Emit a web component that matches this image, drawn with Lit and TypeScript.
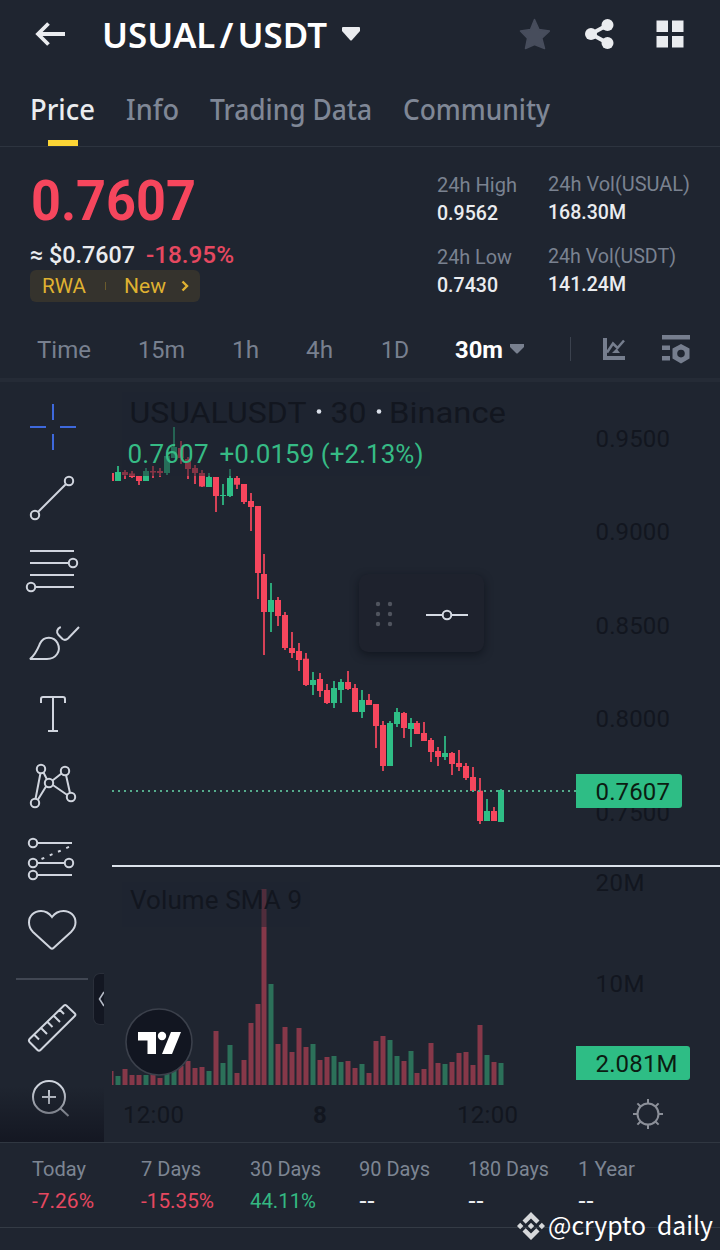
import { LitElement, html, svg, css } from "lit";
import { customElement, property } from "lit/decorators.js";

/** Single-line label with a fixed advance width, centred on its cap height. */
@customElement("fit-label")
export class FitLabel extends LitElement {
  @property({ attribute: false }) text: unknown = "";
  @property({ type: Number }) w = 10;
  @property({ type: Number }) size = 20;
  static styles = css`
    :host { display: block; line-height: 0; flex: none; }
    svg { display: block; overflow: visible; }
    text { fill: currentColor; white-space: pre; }
  `;
  render() {
    return html`<svg width=${this.w} height=${this.size}>
      <text x="0" y=${this.size * 0.857} font-size=${this.size} textLength=${this.w} lengthAdjust="spacingAndGlyphs">${this.text}</text>
    </svg>`;
  }
}

// x centre, high, low, body top, body bottom, rising, volume top
type Bar = [number, number, number, number, number, number, number];
const BARS: Bar[] = [
  [110, 473, 481, 473, 481, 0, 1071],
  [118, 466, 481, 472, 481, 1, 1076],
  [125, 470, 479, 472, 475, 0, 1069],
  [132, 471, 478, 473.5, 477, 0, 1075],
  [139, 476, 485, 476, 481, 0, 1075],
  [146, 468, 481, 471, 481, 1, 1075],
  [153, 466, 478, 471, 472.5, 0, 1073],
  [160, 468, 477, 471, 473, 0, 1078],
  [167, 452, 475, 456, 473, 1, 1071],
  [174, 427, 458, 447, 458, 1, 1069],
  [181, 441, 464, 448, 458, 0, 1066],
  [188, 457, 479, 459, 469, 0, 1061],
  [195, 465, 484, 468, 473, 0, 1068],
  [202, 470, 487, 473, 486.5, 0, 1067],
  [209, 473, 487, 477, 487, 1, 1071],
  [216, 477, 512, 477, 496, 0, 1031],
  [223, 484, 505, 495, 496, 1, 1063],
  [230, 469, 497, 478, 496, 1, 1045],
  [237, 476, 489, 478, 484.7, 0, 1073],
  [244, 484, 504, 484, 502, 0, 1060],
  [251, 493, 531, 501, 507, 0, 1023],
  [258, 506, 599, 506, 573, 0, 1004],
  [264, 554, 655, 574, 612, 0, 889],
  [271, 583, 632, 600, 612, 1, 984],
  [278, 597, 626, 600, 616, 0, 1044],
  [285, 612, 650, 615, 648, 0, 1027],
  [292, 632, 658, 648, 653, 0, 1052],
  [299, 643, 671, 651, 660, 0, 1028],
  [306, 653, 686, 658.7, 685, 0, 1047],
  [313, 672, 695, 680, 685, 1, 1044],
  [320, 673, 697, 679, 691, 0, 1060],
  [327, 684, 704, 690, 703, 0, 1057],
  [334, 681, 708, 688, 703, 1, 1056],
  [341, 679, 703, 682, 690, 1, 1062],
  [348, 671, 690, 682, 689, 0, 1061],
  [355, 684, 712, 688, 712, 0, 1068],
  [362, 690, 718, 700, 712, 1, 1064],
  [369, 694, 705, 700, 705, 0, 1073],
  [376, 704, 748, 704, 726, 0, 1041],
  [383, 721, 771, 725, 766, 0, 1036],
  [390, 721, 766, 723, 766, 1, 1040],
  [397, 708, 727, 712, 724, 1, 1056],
  [404, 712, 738, 713, 728, 0, 1061],
  [411, 718, 747, 723, 729, 1, 1051],
  [417, 721, 734, 723, 734, 0, 1073],
  [424, 722, 741, 733, 741, 0, 1069],
  [431, 738, 762, 740, 752, 0, 1043],
  [438, 747, 766, 751, 757, 0, 1063],
  [445, 736, 760, 753, 757, 1, 1064],
  [452, 752, 775, 753, 764, 0, 1062],
  [459, 750, 771, 763, 767, 0, 1053],
  [466, 763, 780, 766, 778, 0, 1052],
  [473, 767, 791, 777, 791, 0, 1065],
  [480, 778, 824, 790.7, 821, 0, 1025],
  [487, 799, 821, 811, 821, 1, 1055],
  [494, 807, 821, 811, 821, 0, 1062],
  [501, 789, 822, 790, 822, 1, 1063],
];

// Drawing tools share one coordinate space; each cell is a 72px slice of it.
const TOOLS = [
  { y: 391, cls: "active", art: svg`<path d="M53 404V420M53 434V450M30 427H46M60 427H76"/>` },
  { y: 463, cls: "", art: svg`<path d="M38 512L66 484"/><circle cx="69" cy="481" r="4.2"/><circle cx="35" cy="515" r="4.2"/>` },
  { y: 535, cls: "", art: svg`<path d="M30 551H74M30 563H69M30 575H74M36 587H74"/><circle cx="73" cy="563" r="4.2"/><circle cx="31" cy="587" r="4.2"/>` },
  { y: 607, cls: "", art: svg`<path d="M30 659C36 654 38 648 40 643.500C44 635.500 54 636.500 57.500 643C61.500 651 56 659 47 659Z" stroke-linejoin="bevel"/><path d="M60.800 627C56.800 628.500 56 632.500 58.500 635L62.500 639Q65.200 641 68 638.500L79 627"/>` },
  { y: 679, cls: "", art: svg`<path d="M41 703V699Q41 697 43 697H63Q65 697 65 699V703M53 697V731M48 731H58"/>` },
  { y: 751, cls: "", art: svg`<path d="M40.500 773L35.500 799M43.500 772.500L47 779.500M52.500 780.500L61.500 773.500M66 775L70 793M52.800 785L67.300 795M46.300 786L37.700 800"/><circle cx="41" cy="769" r="4.200"/><circle cx="65" cy="771" r="4.200"/><circle cx="49" cy="783" r="4.200"/><circle cx="71" cy="797" r="4.200"/><circle cx="35" cy="803" r="4.200"/>` },
  { y: 823, cls: "", art: svg`<path d="M37 843H72M37 863H65M37 875H72"/><path d="M41.500 859L70 846.500" stroke-dasharray="3 6"/><circle cx="33" cy="843" r="4.200"/><circle cx="69" cy="863" r="4.200"/><circle cx="33" cy="863" r="4.200"/><circle cx="33" cy="875" r="4.200"/>` },
  { y: 895, cls: "", art: svg`<path d="M52 917C49 913 45 911 41 911C34 911 29 916 29 922.500C29 926.500 30.500 929.500 33 932L50.500 948Q52 949.500 53.500 948L71 932C73.500 929.500 75.500 926.500 75.500 922.500C75.500 916 70.500 911 63.500 911C59 911 55 913 52 917Z"/>` },
];
const TOOLS_LOW = [
  { y: 992, art: svg`<path d="M64 1005.500Q65.200 1004.500 66.400 1005.500L74.800 1013.500Q76 1014.800 74.800 1016L40.500 1050Q39 1051.500 37.500 1050L29.500 1042Q28.300 1040.500 29.500 1039ZM34 1034.500L39 1039.500M41 1028L47 1034M47.500 1022L52.500 1027M54 1016L60 1022M60 1010L64 1014"/>` },
  { y: 1064, art: svg`<circle cx="49" cy="1097" r="16"/><path d="M49 1090V1104M42 1097H56M60.500 1108.500L68.500 1116"/>` },
];

const PRICE_TICKS = [
  { t: "0.9500", y: 447 }, { t: "0.9000", y: 540 }, { t: "0.8500", y: 634 },
  { t: "0.8000", y: 727 }, { t: "0.7500", y: 820.5 },
];

@customElement("price-chart")
export class PriceChart extends LitElement {
  static styles = css`
    :host { display: block; position: relative; }
    svg { display: block; }
    text { font-family: Roboto, sans-serif; }
    .up { fill: #2fbe86; } .down { fill: #f6465d; }
    .vup { fill: #2c7059; } .vdown { fill: #863849; }
    .wick { opacity: 0.85; }
    .veil { fill: #1f2530; opacity: 0.52; }
    .ink { fill: #12161f; }
    .green { fill: #36bb85; }
    .tag { fill: #2ebd85; }
    .tagink { fill: #0b1c12; }
    .dot { fill: #d9dfe8; }
    .dots { stroke: #55ac8c; stroke-width: 2; stroke-dasharray: 2 4; }
    .split { fill: #dbe2ea; }
    .badge { fill: #121621; stroke: #3b404b; stroke-width: 1.6; }
    .white { fill: #fff; }
    .sun { fill: none; stroke: #8b8f98; stroke-width: 2; }
    .floating {
      position: absolute; left: 255px; top: 192px; width: 125px; height: 78px;
      background: #1e222d; border-radius: 9px; box-shadow: 0 3px 8px rgba(8, 11, 18, 0.55);
    }
    .grip { fill: #50545e; }
    .handle { fill: none; stroke: #d5dae3; stroke-width: 2; }
  `;
  render() {
    return html`
      <svg width="616" height="760" viewBox="104 382 616 760">
        <defs><clipPath id="plot"><rect x="112" y="382" width="608" height="760"/></clipPath></defs>
        <g clip-path="url(#plot)">
          ${BARS.map(([x, , , , , up, v]) => svg`<rect class=${up ? "vup" : "vdown"} x=${x - 2.5} y=${v} width=${x === 110 ? 6 : 5} height=${1085 - v}/>`)}
          ${BARS.map(([x, h, l, t, b, up]) => svg`
            <rect class="wick ${up ? "up" : "down"}" x=${x - 1} y=${h} width="2" height=${l - h}/>
            <rect class=${up ? "up" : "down"} x=${x - 3} y=${t} width=${x === 110 ? 7 : 6} height=${b - t}/>`)}
        </g>
        <rect class="veil" x="122" y="392" width="308" height="84"/>
        <rect class="veil" x="122" y="882" width="188" height="45"/>
        <path class="dots" d="M112 791H576"/>

        <text class="ink" x="129.500" y="422.500" font-size="30" textLength="177" lengthAdjust="spacingAndGlyphs">USUALUSDT</text>
        <text class="ink" x="330.500" y="422.500" font-size="30" textLength="36" lengthAdjust="spacingAndGlyphs">30</text>
        <text class="ink" x="389" y="422.500" font-size="30" textLength="117" lengthAdjust="spacingAndGlyphs">Binance</text>
        <circle class="dot" cx="319" cy="411.500" r="2.300"/>
        <circle class="dot" cx="379" cy="411.500" r="2.300"/>
        <text class="green" x="127.500" y="463" font-size="26" textLength="81">0.7607</text>
        <text class="green" x="219.500" y="463" font-size="26" textLength="204">+0.0159 (+2.13%)</text>

        ${PRICE_TICKS.map((p) => svg`<text class="ink" x="595.500" y=${p.y} font-size="24" textLength="74.500">${p.t}</text>`)}
        <rect class="tag" x="576" y="774" width="106" height="34" rx="3"/>
        <rect class="tag" x="576" y="774" width="8" height="34"/>
        <text class="tagink" x="595.500" y="800" font-size="24" textLength="74.500">0.7607</text>

        <rect class="split" x="112" y="865" width="608" height="2"/>
        <text class="ink" x="130" y="909" font-size="26" textLength="172">Volume SMA 9</text>
        <text class="ink" x="595.500" y="891" font-size="24" textLength="49">20M</text>
        <text class="ink" x="595.500" y="992" font-size="24" textLength="49">10M</text>
        <rect class="tag" x="576" y="1046" width="114" height="34" rx="3"/>
        <rect class="tag" x="576" y="1046" width="8" height="34"/>
        <text class="tagink" x="595.500" y="1072" font-size="24" textLength="82">2.081M</text>

        <text class="ink" x="123" y="1123" font-size="24" textLength="61">12:00</text>
        <text class="ink" x="313" y="1123" font-size="24" font-weight="700">8</text>
        <text class="ink" x="457" y="1123" font-size="24" textLength="61">12:00</text>

        <circle class="badge" cx="159" cy="1042" r="33"/>
        <path class="white" d="M138 1032H156V1054H147.500V1040.500H138Z"/>
        <circle class="white" cx="162" cy="1036" r="4.200"/>
        <path class="white" d="M171 1032H181L172 1054H162Z"/>

        <g class="sun">
          <circle cx="648" cy="1114" r="10.500"/>
          ${[0, 45, 90, 135, 180, 225, 270, 315].map((a) => svg`<path d="M648 1103.500V1099" transform="rotate(${a} 648 1114)"/>`)}
        </g>
      </svg>
      <svg class="floating" viewBox="359 574 125 78">
        ${[604, 614, 624].map((y) => svg`<circle class="grip" cx="378" cy=${y} r="2.200"/><circle class="grip" cx="390" cy=${y} r="2.200"/>`)}
        <path class="handle" d="M426 615H442.500M451.500 615H468"/>
        <circle class="handle" cx="447" cy="615" r="4.300"/>
      </svg>`;
  }
}

@customElement("app-root")
export class AppRoot extends LitElement {
  static styles = css`
    :host { display: block; }
    .screen {
      position: relative; width: 720px; height: 1250px; overflow: hidden; box-sizing: border-box;
      background: #1f2530; font-family: Roboto, sans-serif; color: #eaecef;
      display: flex; flex-direction: column;
    }
    svg { display: block; flex: none; }
    .plex { font-family: "Noto Sans", sans-serif; }
    .header { height: 70px; flex: none; box-sizing: border-box; display: flex; align-items: center; padding: 0 35px 2px 34px; }
    .title { font-weight: 600; color: #fff; margin: 3px 0 0 36px; }
    .header .caret { margin-left: 15px; }
    .actions { margin-left: auto; display: flex; align-items: center; gap: 34px; }
    .star { margin-right: 1px; }
    .tabs {
      height: 77px; flex: none; box-sizing: border-box; display: flex; gap: 31px;
      padding: 26px 0 0 30px; border-bottom: 1px solid #2d343f; color: #7f8796; font-weight: 500;
    }
    .tab { display: flex; flex-direction: column; align-items: center; justify-content: space-between; }
    .tab.on { color: #eaecef; }
    .tab.on::after { content: ""; width: 30px; height: 6px; background: #fcd535; }
    .ticker { height: 171px; flex: none; display: flex; }
    .left { padding: 25px 0 0 30px; width: 437px; flex: none; box-sizing: border-box; }
    .price { color: #f6465d; font-weight: 700; margin-left: 1px; }
    .approx { display: flex; gap: 11px; margin: 14px 0 4px; font-weight: 500; }
    .neg { color: #e64860; } .pos { color: #34b882; }
    .badge {
      width: 170px; height: 32px; box-sizing: border-box; border-radius: 6px; background: #35332d; color: #dfb131;
      display: flex; align-items: center; padding-left: 12px;
    }
    .badge i { width: 1px; height: 8px; background: #6b5b2c; margin: 0 18px 0 19px; }
    .badge svg { margin-left: 15px; }
    .stat { display: flex; flex-direction: column; gap: 8px; width: 111px; flex: none; padding-top: 28px; color: #7a8290; }
    .stat.alt { padding-top: 27px; }
    .stat .v { color: #eaecef; font-weight: 500; }
    .stat .v + .k { margin-top: 16px; }
    .frames {
      height: 64px; flex: none; box-sizing: border-box; display: flex; align-items: center; color: #78808f;
      padding: 2px 29px 0 37px; border-bottom: 4px solid #252b36;
    }
    .frames .cur { color: #fff; font-weight: 700; margin-left: 46px; margin-right: 7px; }
    .g1 { margin-left: 47px; } .g2 { margin-left: 47px; } .g3 { margin-left: 47px; } .g4 { margin-left: 48px; }
    .rule { width: 1px; height: 24px; background: #3b424e; margin: 0 31px 0 46px; }
    .frames .gear { margin-left: auto; }
    .main { height: 760px; flex: none; display: flex; border-bottom: 1px solid #303741; }
    .side { width: 104px; position: relative; display: flex; flex-direction: column; padding-top: 9px; box-sizing: border-box; }
    .tool { fill: none; stroke: #d0d5de; stroke-width: 2; }
    .tool.active { stroke: #3e69dc; }
    .sep { height: 2px; margin: 11px 16px 12px; background: #414753; flex: none; }
    .fade { position: absolute; left: 0; bottom: 0; width: 104px; height: 56px; background: linear-gradient(rgba(19, 22, 33, 0), rgba(19, 22, 33, 0.92)); }
    .collapse {
      position: absolute; right: 0; top: 591px; width: 11px; height: 52px; box-sizing: border-box;
      background: #131722; border: 1px solid #2a2f3a; border-right: 0; border-radius: 7px 0 0 7px;
    }
    .collapse path { fill: none; stroke: #b4bac5; stroke-width: 1.600; }
    .perf {
      height: 85px; flex: none; box-sizing: border-box; display: grid; grid-template-columns: repeat(4, 109px) 110px 109px;
      padding: 16px 0 0 32px; border-bottom: 1px solid #343b45; color: #7d8593;
    }
    .perf .col { display: flex; flex-direction: column; gap: 12px; }
    .perf .none { color: #eaecef; font-weight: 500; }
    .mark {
      position: absolute; left: 517px; top: 1211px; display: flex; align-items: center; gap: 3px; color: #fff;
      font-family: "Noto Sans CJK SC", sans-serif;
    }
    .mark path { fill: #d6d8da; }
  `;

  render() {
    const stat = (k: string, kw: number, v: string, vw: number) => html`
      <fit-label class="k" .text=${k} .w=${kw} .size=${20}></fit-label>
      <fit-label class="v" .text=${v} .w=${vw} .size=${20}></fit-label>`;
    const tab = (t: string, w: number, on = false) => html`
      <div class="tab ${on ? "on" : ""}"><fit-label class="plex" .text=${t} .w=${w} .size=${28}></fit-label></div>`;
    const frame = (t: string, w: number, cls: string) => html`<fit-label class=${cls} .text=${t} .w=${w} .size=${24}></fit-label>`;
    const perf = (t: string, w: number, v: string, vw: number, cls: string) => html`
      <div class="col">
        <fit-label .text=${t} .w=${w} .size=${20}></fit-label>
        <fit-label class=${cls} .text=${v} .w=${vw} .size=${20}></fit-label>
      </div>`;
    const pair = svg`USUAL<tspan dx="4">/</tspan><tspan dx="4">USDT</tspan>`;
    return html`
      <div class="screen">
        <div class="header">
          <svg width="32" height="26" viewBox="34 21 32 26"><path d="M65 34H38M48.500 23.500L38 34L48.500 44.500" fill="none" stroke="#eaecef" stroke-width="3.800"/></svg>
          <fit-label class="title plex" .text=${pair} .w=${225} .size=${34.5}></fit-label>
          <svg class="caret" width="18" height="14" viewBox="0 0 18 14"><path d="M1 0H17Q18 0 18 1V4L10 13Q9 14 8 13L0 4V1Q0 0 1 0Z" fill="#eaecef"/></svg>
          <div class="actions">
            <svg class="star" width="31" height="32" viewBox="519 18 31 32"><path d="M534.500 19.500L539 29.500L549.500 31L541.800 38.300L544.500 48.500L534.500 44.500L525.500 48.500L527.500 38.300L520.500 31L530.500 29.500Z" fill="#474d5c" stroke="#474d5c" stroke-width="1.500" stroke-linejoin="round"/></svg>
            <svg width="30" height="32" viewBox="585 18 30 32"><g fill="#eaecef"><circle cx="607.500" cy="25" r="6"/><circle cx="591" cy="34" r="6"/><circle cx="607.500" cy="43" r="6"/></g><path d="M607.500 25L591 34L607.500 43" fill="none" stroke="#eaecef" stroke-width="4"/></svg>
            <svg class="grid" width="36" height="28" viewBox="649 20 36 28"><path d="M656.500 20.500H668V32H656.500ZM672 20.500H683.500V32H672ZM656.500 36H668V47.500H656.500ZM672 36H683.500V47.500H672Z" fill="#eaecef"/></svg>
          </div>
        </div>

        <div class="tabs">
          ${tab("Price", 65, true)} ${tab("Info", 53)} ${tab("Trading Data", 162)} ${tab("Community", 147)}
        </div>

        <div class="ticker">
          <div class="left">
            <fit-label class="price" .text=${"0.7607"} .w=${165} .size=${56}></fit-label>
            <div class="approx">
              <fit-label .text=${"≈ $0.7607"} .w=${105} .size=${24}></fit-label>
              <fit-label class="neg" .text=${"-18.95%"} .w=${88} .size=${24}></fit-label>
            </div>
            <div class="badge">
              <fit-label .text=${"RWA"} .w=${44} .size=${20}></fit-label><i></i>
              <fit-label .text=${"New"} .w=${42} .size=${20}></fit-label>
              <svg width="8" height="12" viewBox="0 0 8 12"><path d="M1.500 1.500L6 6L1.500 10.500" fill="none" stroke="#dfb131" stroke-width="2.400"/></svg>
            </div>
          </div>
          <div class="stat">${stat("24h High", 80, "0.9562", 61)}${stat("24h Low", 75, "0.7430", 61)}</div>
          <div class="stat alt">${stat("24h Vol(USUAL)", 142, "168.30M", 78)}${stat("24h Vol(USDT)", 128, "141.24M", 78)}</div>
        </div>

        <div class="frames">
          ${frame("Time", 54, "")} ${frame("15m", 47, "g1")} ${frame("1h", 27, "g2")} ${frame("4h", 27, "g3")} ${frame("1D", 28, "g4")}
          ${frame("30m", 48, "cur")}
          <svg width="14" height="10" viewBox="0 0 14 10"><path d="M0 0H14V3L8 9Q7 10 6 9L0 3Z" fill="#78808f"/></svg>
          <div class="rule"></div>
          <svg width="24" height="24" viewBox="603 336 24 24"><path d="M604 337H608V355H626V359H604Z" fill="#767e8e"/><path d="M608 351.500L614 342.500L618.500 347L625 339.500" fill="none" stroke="#767e8e" stroke-width="2.500"/><path d="M617.500 347.500L621 352H613Z" fill="#767e8e"/></svg>
          <svg class="gear" width="30" height="30" viewBox="661 334 30 30"><path d="M662 335H690V339.500H662ZM662 345.500H670V350H662ZM662 356H670V360.500H662ZM681 344L689.500 348.500V358.500L681 363.500L672.500 358.500V348.500ZM681 349.800A3.800 3.800 0 1 0 681 357.400A3.800 3.800 0 1 0 681 349.800Z" fill="#767e8e" fill-rule="evenodd"/></svg>
        </div>

        <div class="main">
          <div class="side">
            ${TOOLS.map((t) => html`<svg class="tool ${t.cls}" width="104" height="72" viewBox="0 ${t.y} 104 72">${t.art}</svg>`)}
            <div class="sep"></div>
            ${TOOLS_LOW.map((t) => html`<svg class="tool" width="104" height="72" viewBox="0 ${t.y} 104 72">${t.art}</svg>`)}
            <div class="fade"></div>
            <div class="collapse"><svg width="10" height="50" viewBox="0 0 10 50"><path d="M10 18L5.500 25L10 32"/></svg></div>
          </div>
          <price-chart></price-chart>
        </div>

        <div class="perf">
          ${perf("Today", 54, "-7.26%", 62, "neg")}
          ${perf("7 Days", 60, "-15.35%", 73, "neg")}
          ${perf("30 Days", 71, "44.11%", 66, "pos")}
          ${perf("90 Days", 71, "--", 16, "none")}
          ${perf("180 Days", 81, "--", 16, "none")}
          ${perf("1 Year", 57, "--", 16, "none")}
        </div>

        <div class="mark">
          <svg width="28" height="30" viewBox="0 0 28 30"><path d="M14 1L22.500 9.500L19.300 12.700L14 7.400L8.700 12.700L5.500 9.500ZM3.200 11.800L6.400 15L3.200 18.200L0 15ZM14 11.800L17.200 15L14 18.200L10.800 15ZM24.800 11.800L28 15L24.800 18.200L21.600 15ZM8.700 17.300L14 22.600L19.300 17.300L22.500 20.500L14 29L5.500 20.500Z"/></svg>
          <fit-label .text=${"@crypto  daily"} .w=${165} .size=${25}></fit-label>
        </div>
      </div>`;
  }
}
